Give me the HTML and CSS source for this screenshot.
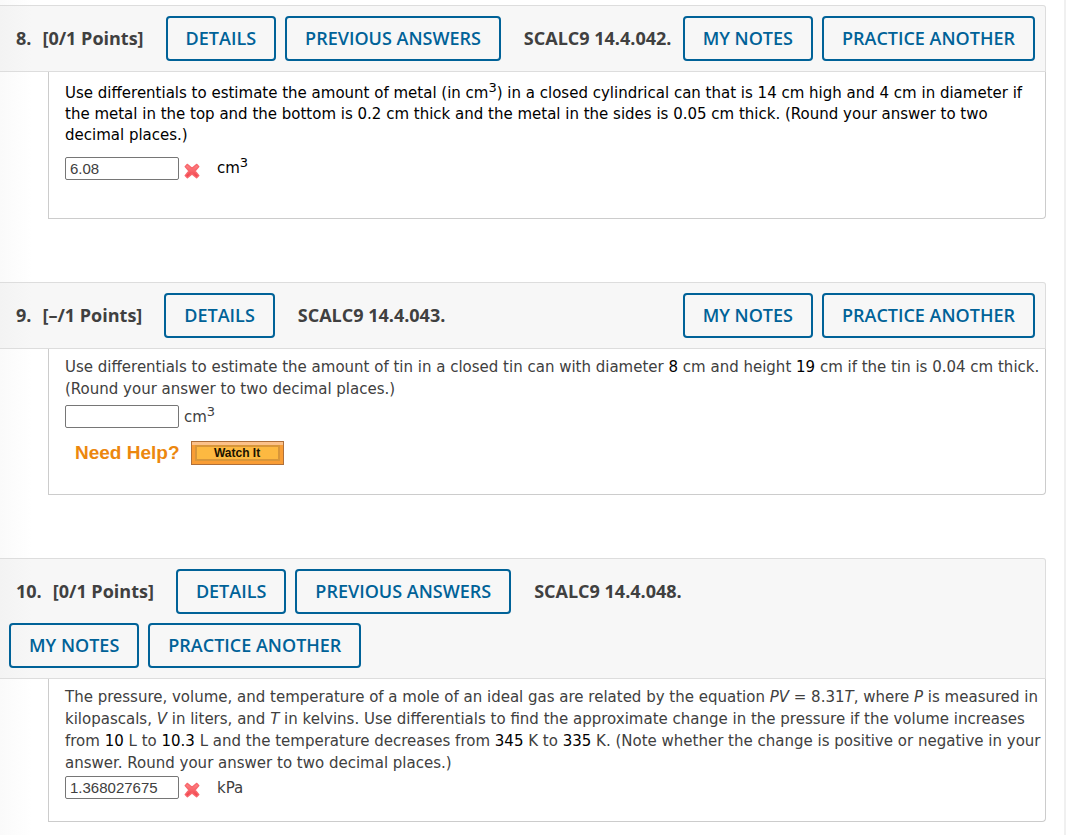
FILE: index.html
```html
<!DOCTYPE html>
<html lang="en">
<head>
<meta charset="utf-8">
<title>Assignment</title>
<link rel="stylesheet" href="styles.css">
</head>
<body>
<svg class="defs" aria-hidden="true">
  <defs>
    <linearGradient id="cross-red" x1="0" y1="0" x2="0" y2="1">
      <stop offset="0" stop-color="#ff8a8a"/>
      <stop offset="1" stop-color="#f03c46"/>
    </linearGradient>
    <symbol id="cross" viewBox="0 0 16 16">
      <path d="M3.2 1.4 8 5.2 12.8 1.4 14.8 3.6 11 8 14.8 12.6 12.6 14.8 8 10.9 3.4 14.8 1.2 12.6 5 8 1.2 3.6Z" fill="url(#cross-red)" stroke="#f8666c" stroke-width="1.4" stroke-linejoin="round"/>
    </symbol>
  </defs>
</svg>
<main class="page">
  <section class="question">
    <header class="bar">
      <h2 class="heading"><span class="num">8.</span><span class="points">[0/1 Points]</span></h2>
      <div class="group">
        <button class="btn" type="button">DETAILS</button>
        <button class="btn" type="button">PREVIOUS ANSWERS</button>
      </div>
      <strong class="source">SCALC9 14.4.042.</strong>
      <div class="group group-end">
        <button class="btn" type="button">MY NOTES</button>
        <button class="btn" type="button">PRACTICE ANOTHER</button>
      </div>
    </header>
    <div class="body body-dark">
      <p class="text">Use differentials to estimate the amount of metal (in cm<sup>3</sup>) in a closed cylindrical can that is 14 cm high and 4 cm in diameter if the metal in the top and the bottom is 0.2 cm thick and the metal in the sides is 0.05 cm thick. (Round your answer to two decimal places.)</p>
      <div class="answer answer-spaced">
        <input class="field" id="a8" type="text" value="6.08">
        <svg class="mark" role="img" aria-label="Incorrect"><use href="#cross"/></svg>
        <label class="unit" for="a8">cm<sup>3</sup></label>
      </div>
    </div>
  </section>

  <section class="question">
    <header class="bar">
      <h2 class="heading"><span class="num">9.</span><span class="points">[–/1 Points]</span></h2>
      <div class="group">
        <button class="btn" type="button">DETAILS</button>
      </div>
      <strong class="source">SCALC9 14.4.043.</strong>
      <div class="group group-end">
        <button class="btn" type="button">MY NOTES</button>
        <button class="btn" type="button">PRACTICE ANOTHER</button>
      </div>
    </header>
    <div class="body">
      <p class="text">Use differentials to estimate the amount of tin in a closed tin can with diameter <span class="value">8</span> cm and height <span class="value">19</span> cm if the tin is 0.04 cm thick. (Round your answer to two decimal places.)</p>
      <div class="answer answer-first">
        <input class="field" id="a9" type="text">
        <label for="a9">cm<sup>3</sup></label>
      </div>
      <div class="help">
        <span class="help-title">Need Help?</span>
        <button class="watch" type="button">Watch It</button>
      </div>
    </div>
  </section>

  <section class="question">
    <header class="bar">
      <h2 class="heading"><span class="num">10.</span><span class="points">[0/1 Points]</span></h2>
      <div class="group">
        <button class="btn" type="button">DETAILS</button>
        <button class="btn" type="button">PREVIOUS ANSWERS</button>
      </div>
      <strong class="source">SCALC9 14.4.048.</strong>
      <div class="group">
        <button class="btn" type="button">MY NOTES</button>
        <button class="btn" type="button">PRACTICE ANOTHER</button>
      </div>
    </header>
    <div class="body">
      <p class="text">The pressure, volume, and temperature of a mole of an ideal gas are related by the equation <i>PV</i> = 8.31<i>T</i>, where <i>P</i> is measured in kilopascals, <i>V</i> in liters, and <i>T</i> in kelvins. Use differentials to find the approximate change in the pressure if the volume increases from <span class="value">10</span> L to <span class="value">10.3</span> L and the temperature decreases from <span class="value">345</span> K to <span class="value">335</span> K. (Note whether the change is positive or negative in your answer. Round your answer to two decimal places.)</p>
      <div class="answer">
        <input class="field" id="a10" type="text" value="1.368027675">
        <svg class="mark" role="img" aria-label="Incorrect"><use href="#cross"/></svg>
        <label class="unit" for="a10">kPa</label>
      </div>
    </div>
  </section>
</main>
</body>
</html>
```
FILE: styles.css
```css
* { box-sizing: border-box; }

body {
  margin: 0;
  background: #fff;
  color: #404040;
  font-family: Verdana, "DejaVu Sans", sans-serif;
  font-size: 15px;
}

.defs { position: absolute; width: 0; height: 0; }

.page {
  min-height: 100vh;
  padding: 5px 18px 0 0;
  border-right: 2px solid #f0f0f0;
  background: linear-gradient(to right, #fafafa, #fff 32px);
}

.question { margin-bottom: 63px; }
.question:last-child { margin-bottom: 0; }

.bar {
  display: flex;
  flex-wrap: wrap;
  align-items: center;
  gap: 9px;
  padding: 10px 10px 10px 9px;
  border: 1px solid #ddd;
  border-left: 0;
  border-radius: 0 3px 0 0;
  background: linear-gradient(to right, #f3f3f3, #f7f7f7 32px);
  font-family: "Open Sans", sans-serif;
  font-size: 18px;
}

.heading {
  display: flex;
  gap: 11px;
  margin: 0;
  padding: 0 13px 2px 7px;
  font-size: 18px;
  font-weight: 700;
  white-space: nowrap;
}

.source { padding: 0 0 2px 14px; font-weight: 700; white-space: nowrap; }

.group { display: flex; gap: 9px; }
.group-end { margin-left: auto; }

.btn {
  height: 45px;
  padding: 0 18px 2px;
  border: 2px solid #006298;
  border-radius: 4px;
  background: transparent;
  color: #006298;
  font: 600 18px "Open Sans", sans-serif;
  white-space: nowrap;
}

.body {
  margin-left: 48px;
  padding: 7px 0 22px 16px;
  border: 1px solid #ccc;
  border-top: 0;
  border-radius: 0 0 4px 0;
  background: #fff;
  line-height: 22px;
}

.body-dark { padding: 11px 0 38px 16px; color: #000; line-height: 21px; }

.text { margin: 0; }

sup { font-size: 13px; line-height: 0; }

.answer { display: flex; align-items: center; gap: 5px; padding-top: 2px; }
.answer-first { padding-top: 5px; }
.answer-spaced { padding-top: 11px; }

.field {
  width: 114px;
  height: 23px;
  padding: 0 4px;
  border: 1px solid #767676;
  border-radius: 2px;
  background: #fff;
  color: #404040;
  font: 15px "Liberation Sans", Arial, sans-serif;
}

.mark { width: 16px; height: 16px; margin-top: 4px; }
.unit { margin-left: 12px; }
.value { color: #000; }

.help {
  display: flex;
  align-items: center;
  gap: 11px;
  padding: 13px 0 7px 10px;
  font-family: "Liberation Sans", Arial, sans-serif;
}

.help-title { color: #ec870e; font-size: 19px; font-weight: 700; }

.watch {
  width: 93px;
  height: 24px;
  padding: 0;
  border: 1px solid #b0703a;
  background: #fdb941;
  box-shadow: inset 0 3px 0 0 #fcc189, inset 0 0 0 3px #f99d35, inset 0 0 0 5px #d8963a;
  color: #1a1200;
  font: 700 12px "Liberation Sans", Arial, sans-serif;
}
```
